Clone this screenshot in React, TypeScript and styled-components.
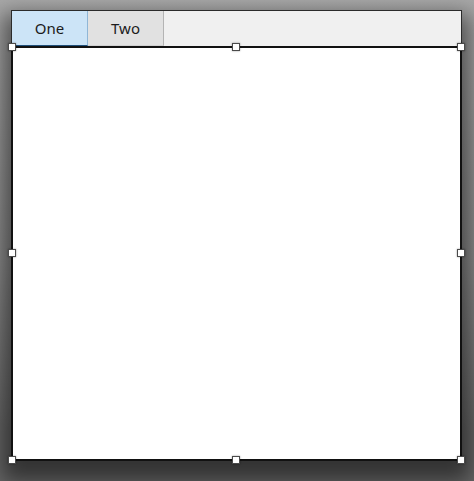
import React from 'react'
import styled, { createGlobalStyle } from 'styled-components'

const GlobalStyle = createGlobalStyle`
	html, body {
		margin: 0;
		padding: 0;
	}
	body {
		width: 474px;
		height: 481px;
		overflow: hidden;
		background: linear-gradient(#a8a8a8, #8c8c8c 55%, #666 90%);
		font-family: 'Noto Sans', 'Open Sans', sans-serif;
	}
`

const Stage = styled.div`
	padding: 10px 0 0 11px;
	height: 481px;
	box-sizing: border-box;
`

const Frame = styled.div`
	position: relative;
	width: 451px;
	height: 451px;
	display: flex;
	flex-direction: column;
	box-shadow: 0 12px 20px 8px rgba(0, 0, 0, 0.5);
`

const TabStrip = styled.div`
	display: flex;
	height: 36px;
	background: #f0f0f0;
	border: 1px solid #2b2b2b;
	border-bottom: none;
	box-sizing: border-box;
`

const Tab = styled.div<{ $active?: boolean }>`
	width: 76px;
	display: flex;
	align-items: center;
	justify-content: center;
	font-size: 15px;
	color: #1b1b1b;
	background: ${(p) => (p.$active ? '#cce4f7' : '#e1e1e1')};
	border-right: 1px solid ${(p) => (p.$active ? '#8fb6d6' : '#b4b4b4')};
	border-bottom: 1px solid ${(p) => (p.$active ? '#1f4f7a' : '#d0d0d0')};
	box-sizing: border-box;
	padding-bottom: 1px;
`

const Content = styled.div`
	flex: 1;
	background: #fff;
	border: 2px solid #111;
`

const Handle = styled.div<{ $x: string; $y: string }>`
	position: absolute;
	left: ${(p) => p.$x};
	top: ${(p) => p.$y};
	width: 8px;
	height: 8px;
	margin: -4px 0 0 -4px;
	background: #fff;
	border: 1px solid #4a4a4a;
	box-sizing: border-box;
	box-shadow: 0 0 2px rgba(0, 0, 0, 0.45);
`

const handles = [
	['1px', '37px'],
	['225px', '37px'],
	['450px', '37px'],
	['1px', '243px'],
	['450px', '243px'],
	['1px', '450px'],
	['225px', '450px'],
	['450px', '450px'],
]

export default function App() {
	return (
		<>
			<GlobalStyle />
			<Stage>
				<Frame>
					<TabStrip>
						<Tab $active>One</Tab>
						<Tab>Two</Tab>
					</TabStrip>
					<Content />
					{handles.map(([x, y], i) => (
						<Handle key={i} $x={x} $y={y} />
					))}
				</Frame>
			</Stage>
		</>
	)
}
